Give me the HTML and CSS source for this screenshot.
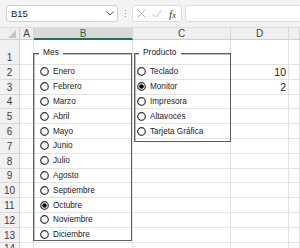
FILE: index.html
```html
<!DOCTYPE html>
<html lang="es">
<head>
<meta charset="utf-8">
<title>Hoja</title>
<link rel="stylesheet" href="styles.css">
</head>
<body>
<div class="app">
  <div class="toolbar">
    <div class="namebox">
      <span class="nb-text">B15</span>
      <svg class="chev" width="8" height="5" viewBox="0 0 8 5"><path d="M0.5 0.5 L4 4 L7.5 0.5" fill="none" stroke="#555" stroke-width="1"/></svg>
    </div>
    <div class="dots"><i></i><i></i><i></i></div>
    <div class="fbtns">
      <svg width="9" height="9" viewBox="0 0 9 9"><path d="M0.5 0.5 L8.5 8.5 M8.5 0.5 L0.5 8.5" stroke="#b8b8b8" stroke-width="1" fill="none"/></svg>
      <svg width="10" height="8" viewBox="0 0 10 8"><path d="M0.5 4 L3.5 7 L9.5 0.5" stroke="#b8b8b8" stroke-width="1" fill="none"/></svg>
      <span class="fx">f<span class="fx-x">x</span></span>
    </div>
    <div class="finput"></div>
  </div>

  <div class="sheet">
    <div class="grid">
      <div class="corner"><svg width="8" height="8" viewBox="0 0 8 8"><polygon points="8,0 8,8 0,8" fill="#c4c4c4"/></svg></div>
      <div class="ch">A</div>
      <div class="ch sel">B</div>
      <div class="ch">C</div>
      <div class="ch">D</div>
      <div class="ch last"></div>

      <div class="rh">1</div><div class="c"></div><div class="c"></div><div class="c"></div><div class="c"></div><div class="c"></div>
      <div class="rh">2</div><div class="c"></div><div class="c"></div><div class="c"></div><div class="c num">10</div><div class="c"></div>
      <div class="rh">3</div><div class="c"></div><div class="c"></div><div class="c"></div><div class="c num">2</div><div class="c"></div>
      <div class="rh">4</div><div class="c"></div><div class="c"></div><div class="c"></div><div class="c"></div><div class="c"></div>
      <div class="rh">5</div><div class="c"></div><div class="c"></div><div class="c"></div><div class="c"></div><div class="c"></div>
      <div class="rh">6</div><div class="c"></div><div class="c"></div><div class="c"></div><div class="c"></div><div class="c"></div>
      <div class="rh">7</div><div class="c"></div><div class="c"></div><div class="c"></div><div class="c"></div><div class="c"></div>
      <div class="rh">8</div><div class="c"></div><div class="c"></div><div class="c"></div><div class="c"></div><div class="c"></div>
      <div class="rh">9</div><div class="c"></div><div class="c"></div><div class="c"></div><div class="c"></div><div class="c"></div>
      <div class="rh">10</div><div class="c"></div><div class="c"></div><div class="c"></div><div class="c"></div><div class="c"></div>
      <div class="rh">11</div><div class="c"></div><div class="c"></div><div class="c"></div><div class="c"></div><div class="c"></div>
      <div class="rh">12</div><div class="c"></div><div class="c"></div><div class="c"></div><div class="c"></div><div class="c"></div>
      <div class="rh">13</div><div class="c"></div><div class="c"></div><div class="c"></div><div class="c"></div><div class="c"></div>
      <div class="rh">14</div><div class="c"></div><div class="c"></div><div class="c"></div><div class="c"></div><div class="c"></div>
    </div>

    <div class="group g-mes">
      <span class="legend">Mes</span>
      <div class="opt"><svg class="radio" viewBox="0 0 9 9"><circle cx="4.5" cy="4.5" r="3.8"/></svg><span>Enero</span></div>
      <div class="opt"><svg class="radio" viewBox="0 0 9 9"><circle cx="4.5" cy="4.5" r="3.8"/></svg><span>Febrero</span></div>
      <div class="opt"><svg class="radio" viewBox="0 0 9 9"><circle cx="4.5" cy="4.5" r="3.8"/></svg><span>Marzo</span></div>
      <div class="opt"><svg class="radio" viewBox="0 0 9 9"><circle cx="4.5" cy="4.5" r="3.8"/></svg><span>Abril</span></div>
      <div class="opt"><svg class="radio" viewBox="0 0 9 9"><circle cx="4.5" cy="4.5" r="3.8"/></svg><span>Mayo</span></div>
      <div class="opt"><svg class="radio" viewBox="0 0 9 9"><circle cx="4.5" cy="4.5" r="3.8"/></svg><span>Junio</span></div>
      <div class="opt"><svg class="radio" viewBox="0 0 9 9"><circle cx="4.5" cy="4.5" r="3.8"/></svg><span>Julio</span></div>
      <div class="opt"><svg class="radio" viewBox="0 0 9 9"><circle cx="4.5" cy="4.5" r="3.8"/></svg><span>Agosto</span></div>
      <div class="opt"><svg class="radio" viewBox="0 0 9 9"><circle cx="4.5" cy="4.5" r="3.8"/></svg><span>Septiembre</span></div>
      <div class="opt"><svg class="radio on" viewBox="0 0 9 9"><circle cx="4.5" cy="4.5" r="3.8"/><circle class="dot" cx="4.5" cy="4.5" r="2.3"/></svg><span>Octubre</span></div>
      <div class="opt"><svg class="radio" viewBox="0 0 9 9"><circle cx="4.5" cy="4.5" r="3.8"/></svg><span>Noviembre</span></div>
      <div class="opt"><svg class="radio" viewBox="0 0 9 9"><circle cx="4.5" cy="4.5" r="3.8"/></svg><span>Diciembre</span></div>
    </div>

    <div class="group g-prod">
      <span class="legend">Producto</span>
      <div class="opt"><svg class="radio" viewBox="0 0 9 9"><circle cx="4.5" cy="4.5" r="3.8"/></svg><span>Teclado</span></div>
      <div class="opt"><svg class="radio on" viewBox="0 0 9 9"><circle cx="4.5" cy="4.5" r="3.8"/><circle class="dot" cx="4.5" cy="4.5" r="2.3"/></svg><span>Monitor</span></div>
      <div class="opt"><svg class="radio" viewBox="0 0 9 9"><circle cx="4.5" cy="4.5" r="3.8"/></svg><span>Impresora</span></div>
      <div class="opt"><svg class="radio" viewBox="0 0 9 9"><circle cx="4.5" cy="4.5" r="3.8"/></svg><span>Altavoces</span></div>
      <div class="opt"><svg class="radio" viewBox="0 0 9 9"><circle cx="4.5" cy="4.5" r="3.8"/></svg><span>Tarjeta Gráfica</span></div>
    </div>
  </div>
</div>
</body>
</html>
```

FILE: styles.css
```css
* { box-sizing: border-box; }
html, body { margin: 0; padding: 0; }
body {
  width: 300px;
  height: 248px;
  overflow: hidden;
  background: #ffffff;
  font-family: "Liberation Sans", Arial, sans-serif;
}
.app {
  display: flex;
  flex-direction: column;
  height: 248px;
}

/* toolbar */
.toolbar {
  height: 27px;
  flex: none;
  display: flex;
  align-items: center;
  padding-left: 6px;
  background: #f3f3f3;
}
.namebox {
  width: 112px;
  height: 17px;
  background: #fff;
  border: 1px solid #cfcfcf;
  border-radius: 3px;
  display: flex;
  align-items: center;
  justify-content: space-between;
  padding: 0 3px 0 4px;
}
.nb-text {
  font-size: 9.5px;
  color: #222;
}
.dots {
  margin-left: 7px;
  display: flex;
  flex-direction: column;
  gap: 2px;
}
.dots i {
  display: block;
  width: 1px;
  height: 1px;
  background: #9a9a9a;
}
.fbtns {
  margin-left: 6px;
  width: 50px;
  height: 17px;
  background: #fff;
  border: 1px solid #dcdcdc;
  border-radius: 3px;
  display: flex;
  align-items: center;
  gap: 6px;
  padding-left: 4px;
}
.fx {
  font-family: "Liberation Serif", "Times New Roman", serif;
  font-style: italic;
  font-size: 11px;
  color: #333;
  margin-left: 1px;
}
.fx-x { font-size: 9px; }
.finput {
  margin-left: 3px;
  flex: 1;
  height: 17px;
  background: #fff;
  border: 1px solid #dcdcdc;
  border-right: none;
  border-radius: 3px 0 0 3px;
}

/* sheet */
.sheet {
  position: relative;
  flex: 1;
  overflow: hidden;
}
.grid {
  display: grid;
  grid-template-columns: 20px 14px 99px 98px 58px 1fr;
  grid-template-rows: 13px 25px repeat(12, 14.8px) 1fr;
  height: 100%;
  color: #333;
}
.corner {
  background: #efefef;
  border-bottom: 1px solid #cfcfcf;
  border-right: 1px solid #cfcfcf;
  border-top: 1px solid #dedede;
  display: flex;
  align-items: flex-end;
  justify-content: flex-end;
  padding: 0 3px 1px 0;
}
.ch {
  background: #efefef;
  border-top: 1px solid #dedede;
  border-right: 1px solid #d6d6d6;
  border-bottom: 1px solid #cfcfcf;
  display: flex;
  align-items: center;
  justify-content: center;
  color: #444;
  font-size: 10px;
}
.ch.sel {
  background: #d9d9d9;
  color: #1d6b3f;
  border-bottom: 2px solid #217346;
}
.rh {
  background: #f1f1f1;
  border-right: 1px solid #cfcfcf;
  border-bottom: 1px solid #dadada;
  display: flex;
  align-items: flex-end;
  justify-content: center;
  padding-bottom: 1px;
  color: #3b3b4f;
  font-size: 10px;
}
.c {
  border-right: 1px solid #e3e3e3;
  border-bottom: 1px solid #e3e3e3;
}
.num {
  display: flex;
  align-items: flex-end;
  justify-content: flex-end;
  padding: 0 2px 1px 0;
  font-size: 10.5px;
  color: #222;
}

/* form controls over the sheet */
.group {
  position: absolute;
  top: 26px;
  border: 1px solid #5e5e5e;
  box-shadow: inset 1px 1px 0 #bdbdbd;
  padding-top: 10.6px;
  font-size: 8.2px;
  color: #1a1a1a;
}
.g-mes {
  left: 33px;
  width: 99px;
  height: 188px;
  padding-left: 6px;
}
.g-prod {
  left: 134px;
  width: 97px;
  height: 89px;
  padding-left: 2px;
}
.legend {
  position: absolute;
  top: -7px;
  left: 5px;
  line-height: 10px;
  padding: 0 4px 0 4px;
  background: #fff;
  font-size: 8.4px;
}
.g-prod .legend { left: 4px; }
.opt {
  height: 14.8px;
  display: flex;
  align-items: center;
  gap: 4px;
}
.radio {
  width: 9px;
  height: 9px;
  flex: none;
}
.radio circle {
  fill: #fff;
  stroke: #333;
  stroke-width: 1.2;
}
.radio circle.dot {
  fill: #000;
  stroke: none;
}
```
